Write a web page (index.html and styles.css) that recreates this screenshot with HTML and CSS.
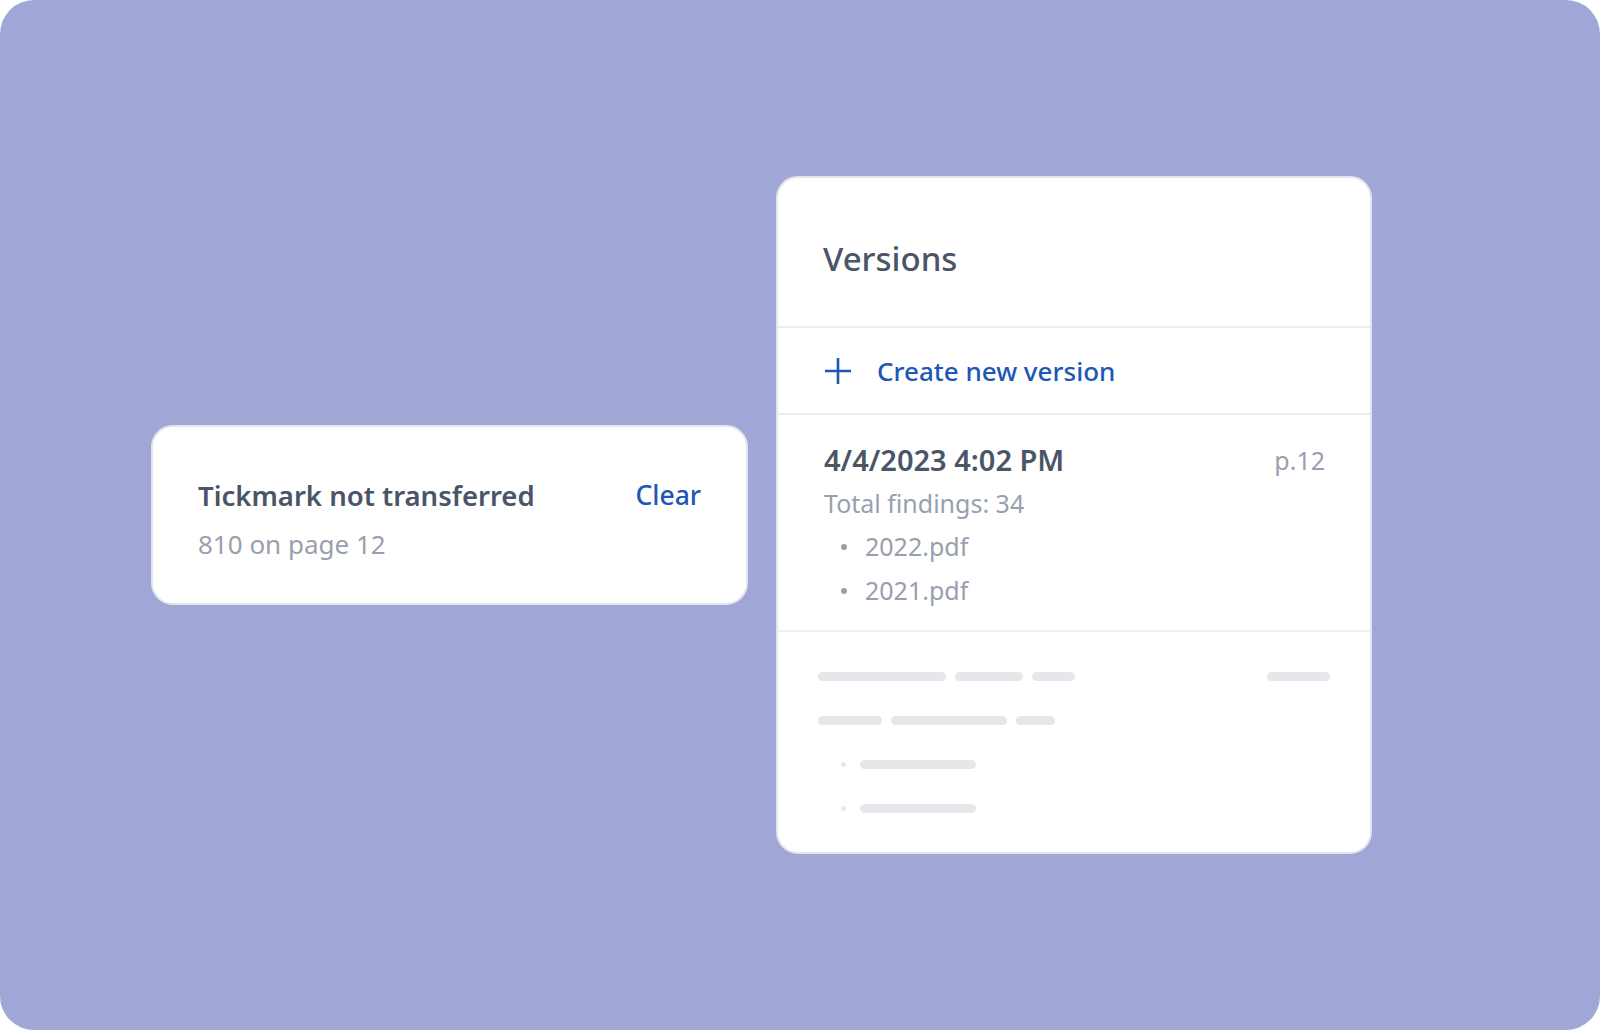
FILE: index.html
```html
<!DOCTYPE html>
<html lang="en">

<head>
    <meta charset="UTF-8">
    <meta name="viewport" content="width=device-width, initial-scale=1.0">
    <title>Versions</title>
    <link rel="stylesheet" href="styles.css">
</head>

<body>
    <div class="stage">
        <div class="notice">
            <div class="notice-text">
                <div class="notice-title">Tickmark not transferred</div>
                <div class="notice-sub">810 on page 12</div>
            </div>
            <a class="link clear">Clear</a>
        </div>

        <div class="panel">
            <div class="panel-head">Versions</div>
            <div class="panel-create">
                <svg class="plus" width="28" height="28" viewBox="0 0 28 28">
                    <path d="M14 1v26M1 14h26" stroke="currentColor" stroke-width="2.6" fill="none" />
                </svg>
                <span>Create new version</span>
            </div>
            <div class="version">
                <div class="version-top">
                    <span class="version-date">4/4/2023 4:02 PM</span>
                    <span class="version-page">p.12</span>
                </div>
                <div class="version-total">Total findings: 34</div>
                <ul class="files">
                    <li>2022.pdf</li>
                    <li>2021.pdf</li>
                </ul>
            </div>
            <div class="version skeleton">
                <div class="sk-row">
                    <span class="bar" style="width:128px"></span>
                    <span class="bar" style="width:68px"></span>
                    <span class="bar" style="width:43px"></span>
                    <span class="bar sk-right" style="width:63px"></span>
                </div>
                <div class="sk-row">
                    <span class="bar" style="width:64px"></span>
                    <span class="bar" style="width:116px"></span>
                    <span class="bar" style="width:39px"></span>
                </div>
                <div class="sk-row sk-item">
                    <span class="dot"></span>
                    <span class="bar" style="width:116px"></span>
                </div>
                <div class="sk-row sk-item">
                    <span class="dot"></span>
                    <span class="bar" style="width:116px"></span>
                </div>
            </div>
        </div>
    </div>
</body>

</html>
```

FILE: styles.css
```css
* {
    box-sizing: border-box;
}

body {
    margin: 0;
    background-color: #FFF;
    font-family: "Noto Sans", "Open Sans", sans-serif;
}

.stage {
    width: 1600px;
    height: 1030px;
    border-radius: 34px;
    background-color: #A0A7D6;
    display: flex;
    align-items: center;
    padding-left: 151px;
    gap: 28px;
}

.notice {
    width: 597px;
    height: 180px;
    background-color: #FFF;
    border: 2px solid #E3E5EC;
    border-radius: 22px;
    display: flex;
    justify-content: space-between;
    align-items: flex-start;
    padding: 49px 45px 0 45px;
}

.notice-title {
    font-size: 27.5px;
    font-weight: 600;
    line-height: 40px;
    color: #4A5568;
}

.notice-sub {
    margin-top: 10px;
    font-size: 26px;
    line-height: 36px;
    color: #98A0AF;
}

.link {
    color: #2057B6;
    cursor: pointer;
}

.clear {
    font-size: 26.5px;
    font-weight: 500;
    line-height: 38px;
}

.panel {
    width: 596px;
    height: 678px;
    background-color: #FFF;
    border: 2px solid #E3E5EC;
    border-radius: 22px;
    overflow: hidden;
}

.panel-head {
    padding: 57px 45px 43px;
    font-size: 33px;
    font-weight: 500;
    line-height: 48px;
    color: #4A5568;
    border-bottom: 2px solid #ECEDF1;
}

.panel-create {
    display: flex;
    align-items: center;
    gap: 25px;
    height: 87px;
    padding: 0 46px;
    color: #2057B6;
    font-size: 26px;
    font-weight: 500;
    border-bottom: 2px solid #ECEDF1;
}

.version {
    padding: 23px 45px 18px 46px;
    border-bottom: 2px solid #F0F1F4;
}

.version-top {
    display: flex;
    justify-content: space-between;
    align-items: center;
    line-height: 44px;
}

.version-date {
    font-size: 29px;
    font-weight: 600;
    color: #4A5568;
}

.version-page {
    font-size: 25px;
    color: #98A0AF;
}

.version-total {
    font-size: 25px;
    line-height: 42px;
    color: #98A0AF;
}

.files {
    margin: 0;
    padding: 0 0 0 17px;
    list-style: none;
}

.files li {
    position: relative;
    padding-left: 24px;
    font-size: 25px;
    line-height: 44px;
    color: #98A0AF;
}

.files li::before {
    content: "";
    position: absolute;
    left: 0;
    top: 20px;
    width: 6px;
    height: 6px;
    border-radius: 50%;
    background-color: #98A0AF;
}

.skeleton {
    border-bottom: 0;
    padding: 22px 40px 0 40px;
}

.sk-row {
    display: flex;
    align-items: center;
    gap: 9px;
    height: 44px;
}

.sk-item {
    padding-left: 23px;
    gap: 14px;
}

.bar {
    height: 9px;
    border-radius: 5px;
    background-color: #E5E7EB;
}

.sk-right {
    margin-left: auto;
}

.dot {
    width: 5px;
    height: 5px;
    border-radius: 50%;
    background-color: #E5E7EB;
}
```
